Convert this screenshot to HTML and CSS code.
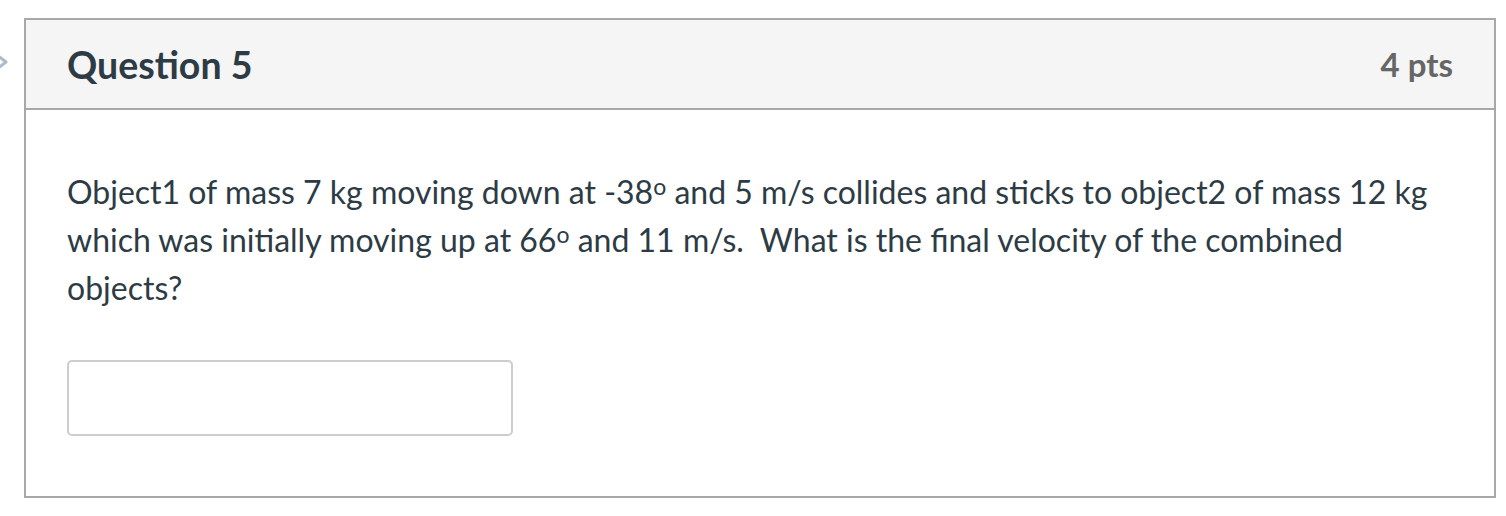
FILE: index.html
```html
<!DOCTYPE html>
<html>
<head>
<meta charset="utf-8">
<link rel="stylesheet" href="styles.css">
</head>
<body>
<div class="page">
  <div class="flag">
    <svg width="10" height="26" viewBox="0 0 10 26"><path d="M-8 2 L6 13 L-8 24" fill="none" stroke="#a9bccb" stroke-width="3" stroke-linejoin="round"/></svg>
  </div>
  <div class="card">
    <div class="header">
      <div class="title">Question 5</div>
      <div class="pts">4 pts</div>
    </div>
    <div class="body">
      <p class="text">Object1 of mass 7 kg moving down at -38<sup>o</sup> and 5 m/s collides and sticks to object2 of mass 12 kg which was initially moving up at 66<sup>o</sup> and 11 m/s.&nbsp; What is the final velocity of the combined objects?</p>
      <div class="answer"></div>
    </div>
  </div>
</div>
</body>
</html>
```
FILE: styles.css
```css
html, body {
  margin: 0;
  padding: 0;
  background: #fff;
}
.page {
  position: relative;
  padding: 18px 0 0 24px;
  font-family: Lato, "Noto Sans", sans-serif;
  color: #2d3b45;
}
.flag {
  position: absolute;
  left: 0;
  top: 49px;
}
.card {
  width: 1468px;
  height: 476px;
  border: 2px solid #a8a8a8;
  display: flex;
  flex-direction: column;
}
.header {
  background: #f5f5f5;
  height: 88px;
  border-bottom: 2px solid #a8a8a8;
  display: flex;
  align-items: center;
  justify-content: space-between;
  padding: 0 41px 0 41px;
}
.title {
  font-size: 37.5px;
  font-weight: 700;
  color: #2d3b45;
}
.pts {
  font-size: 33px;
  font-weight: 700;
  color: #666;
}
.body {
  padding: 58px 41px 0 41px;
}
.text {
  margin: 0;
  font-size: 32px;
  line-height: 48px;
}
.text sup {
  font-size: 0.72em;
  line-height: 0;
  vertical-align: 0.4em;
}
.answer {
  margin-top: 48px;
  width: 442px;
  height: 72px;
  border: 2px solid #cdcdcd;
  border-radius: 5px;
}
```
